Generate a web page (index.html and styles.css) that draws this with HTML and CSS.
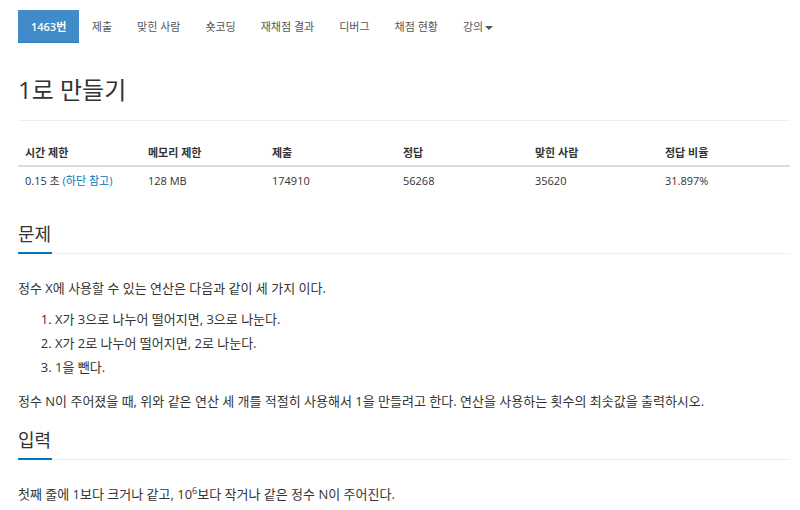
FILE: index.html
```html
<!DOCTYPE html>
<html lang="ko">
<head>
<meta charset="utf-8">
<link rel="stylesheet" href="styles.css">
</head>
<body>
<div class="page">
  <ul class="tabs">
    <li class="tab active">1463번</li>
    <li class="tab">제출</li>
    <li class="tab">맞힌 사람</li>
    <li class="tab">숏코딩</li>
    <li class="tab">재채점 결과</li>
    <li class="tab">디버그</li>
    <li class="tab">채점 현황</li>
    <li class="tab">강의<span class="caret"></span></li>
  </ul>

  <div class="title-wrap">
    <h1 class="title">1로 만들기</h1>
  </div>

  <table class="info">
    <thead>
      <tr>
        <th class="c1">시간 제한</th>
        <th class="c2">메모리 제한</th>
        <th class="c3">제출</th>
        <th class="c4">정답</th>
        <th class="c5">맞힌 사람</th>
        <th class="c6">정답 비율</th>
      </tr>
    </thead>
    <tbody>
      <tr>
        <td>0.15 초 <span class="link">(하단 참고)</span></td>
        <td>128 MB</td>
        <td>174910</td>
        <td>56268</td>
        <td>35620</td>
        <td>31.897%</td>
      </tr>
    </tbody>
  </table>

  <section class="section">
    <div class="headline"><h2>문제</h2></div>
    <p class="text">정수 X에 사용할 수 있는 연산은 다음과 같이 세 가지 이다.</p>
    <ol class="list">
      <li>X가 3으로 나누어 떨어지면, 3으로 나눈다.</li>
      <li>X가 2로 나누어 떨어지면, 2로 나눈다.</li>
      <li>1을 뺀다.</li>
    </ol>
    <p class="text">정수 N이 주어졌을 때, 위와 같은 연산 세 개를 적절히 사용해서 1을 만들려고 한다. 연산을 사용하는 횟수의 최솟값을 출력하시오.</p>
  </section>

  <section class="section">
    <div class="headline"><h2>입력</h2></div>
    <p class="text">첫째 줄에 1보다 크거나 같고, 10<sup>6</sup>보다 작거나 같은 정수 N이 주어진다.</p>
  </section>
</div>
</body>
</html>
```
FILE: styles.css
```css
* { box-sizing: border-box; }
html, body { margin: 0; padding: 0; background: #fff; }
body {
  font-family: "Open Sans", "Noto Sans CJK KR", sans-serif;
  color: #333;
  font-size: 13px;
  overflow: hidden;
}
.page { padding: 10px 10px 0 18px; }

.tabs {
  list-style: none;
  margin: 0;
  padding: 0;
  display: flex;
  height: 33px;
}
.tab {
  font-size: 11px;
  color: #555;
  padding: 0 12.5px;
  line-height: 33px;
  white-space: nowrap;
}
.tab.active {
  background: #428bca;
  color: #fff;
  font-weight: 600;
  padding: 0 13px;
  border-bottom: 1px solid #2f77b5;
}
.caret {
  display: inline-block;
  width: 0; height: 0;
  margin-left: 2px;
  vertical-align: middle;
  border-top: 4px solid #555;
  border-left: 4px solid transparent;
  border-right: 4px solid transparent;
}

.title-wrap {
  border-bottom: 1px solid #eee;
  padding: 30px 0 13px;
}
.title {
  margin: 0;
  font-size: 24px;
  font-weight: 400;
  line-height: 34px;
  color: #333;
}

.info {
  width: 100%;
  border-collapse: collapse;
  margin-top: 17px;
  margin-bottom: 25px;
  font-size: 11px;
}
.info th {
  text-align: left;
  font-weight: 700;
  padding: 8px 7px 6px;
  border-bottom: 2px solid #ddd;
  line-height: 13px;
}
.info td {
  padding: 7px 7px 8px;
  line-height: 13px;
}
.c1 { width: 123px; }
.c2 { width: 124px; }
.c3 { width: 131px; }
.c4 { width: 132px; }
.c5 { width: 130px; }
.link { color: #0076c0; }

.section { margin-top: 16px; }
.section + .section { margin-top: 15px; }
.headline {
  border-bottom: 1px solid #eee;
}
.headline h2 {
  display: inline-block;
  margin: 0;
  font-size: 18px;
  font-weight: 400;
  line-height: 28px;
  padding-bottom: 4px;
  border-bottom: 2px solid #0076c0;
  margin-bottom: -1px;
  width: 34px;
  white-space: nowrap;
}
.text {
  margin: 24px 0 0;
  font-size: 13px;
  line-height: 20px;
}
.list {
  margin: 9px 0 0;
  padding-left: 37px;
  font-size: 13px;
  line-height: 24px;
}
.list + .text { margin-top: 12px; }
sup { font-size: 9px; line-height: 0; }
```
